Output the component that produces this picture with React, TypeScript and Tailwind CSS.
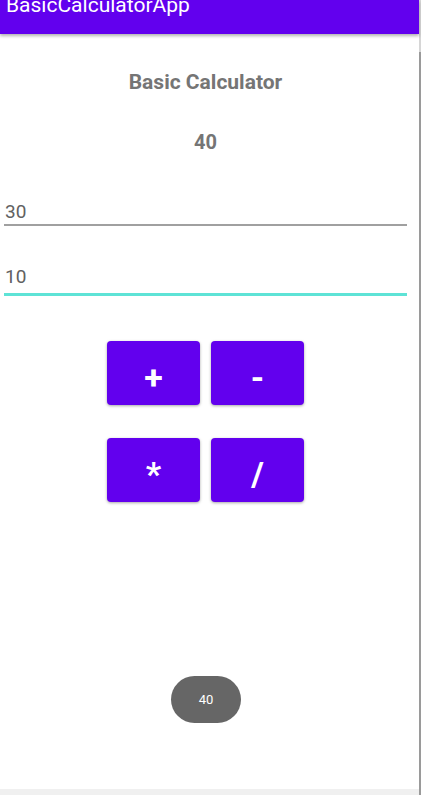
import React from "react";

export default function App() {
  const btn =
    "w-[93px] h-[64px] rounded-[4px] bg-[#6200ee] text-white font-bold text-[34px] leading-[34px] pt-[8px] shadow-[0_1px_3px_rgba(0,0,0,0.35)] flex items-center justify-center";
  return (
    <div className="relative w-[421px] h-[795px] bg-white overflow-hidden" style={{ fontFamily: "Roboto, 'Liberation Sans', sans-serif" }}>
      <div className="flex h-[795px]">
        <div className="flex flex-col w-[419px] h-[789px]">
          <div className="h-[34px] bg-[#6200ee] shadow-[0_2px_3px_rgba(0,0,0,0.3)] relative z-10 overflow-hidden">
            <div className="text-white text-[21px] leading-[21px] pl-[6px] mt-[-5px]">BasicCalculatorApp</div>
          </div>
          <div className="w-[411px] flex flex-col">
            <div className="text-center text-[#757575] font-bold text-[21px] leading-[25px] mt-[36px]">Basic Calculator</div>
            <div className="text-center text-[#757575] font-bold text-[20px] leading-[24px] mt-[35px]">40</div>
            <div className="mx-[4px] mt-[47px]">
              <div className="text-[#616161] text-[19px] leading-[22px] pl-[1px]">30</div>
              <div className="h-[2px] bg-[#a0a0a0] mt-[1px]" />
            </div>
            <div className="mx-[4px] mt-[40px]">
              <div className="text-[#616161] text-[19px] leading-[22px] pl-[1px]">10</div>
              <div className="h-[3px] bg-[#5ee3d6] mt-[5px]" />
            </div>
            <div className="flex flex-col items-center gap-[33px] mt-[45px]">
              <div className="flex gap-[11px]">
                <button className={btn}>+</button>
                <button className={btn}>-</button>
              </div>
              <div className="flex gap-[11px]">
                <button className={btn}>*</button>
                <button className={btn}>/</button>
              </div>
            </div>
          </div>
        </div>
        <div className="w-[2px] h-[795px] flex flex-col">
          <div className="h-[52px] bg-[#d6d6d6]" />
          <div className="flex-1 bg-[#9a9a9a]" />
        </div>
      </div>
      <div className="absolute left-0 bottom-0 w-[419px] h-[6px] bg-[#f0f0f0]" />
      <div className="absolute left-[171px] top-[676px] w-[70px] h-[47px] rounded-full bg-[#666666] text-white text-[13px] flex items-center justify-center">40</div>
    </div>
  );
}
